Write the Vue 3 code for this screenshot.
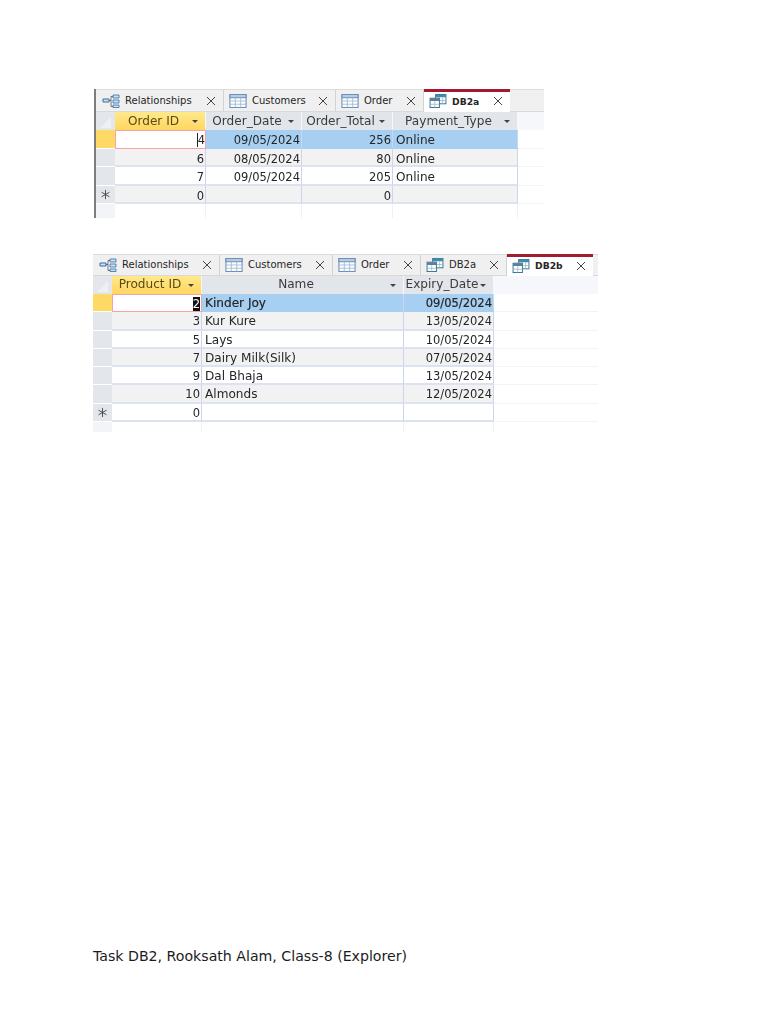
<script setup>
const orderSheet = {
  name: "order",
  tabs: [
    { label: "Relationships", icon: "rel", width: 127 },
    { label: "Customers", icon: "table", width: 112 },
    { label: "Order", icon: "table", width: 88 },
    { label: "DB2a", icon: "query", width: 86, active: true },
  ],
  selector: 19,
  columns: [
    { label: "Order ID", width: 91, picked: true, right: true },
    { label: "Order_Date", width: 96, right: true },
    { label: "Order_Total", width: 91, right: true },
    { label: "Payment_Type", width: 125 },
  ],
  rows: [
    ["4", "09/05/2024", "256", "Online"],
    ["6", "08/05/2024", "80", "Online"],
    ["7", "09/05/2024", "205", "Online"],
  ],
  newRow: ["0", "", "0", ""],
};

const productSheet = {
  name: "product",
  tabs: [
    { label: "Relationships", icon: "rel", width: 126 },
    { label: "Customers", icon: "table", width: 113 },
    { label: "Order", icon: "table", width: 88 },
    { label: "DB2a", icon: "query", width: 86 },
    { label: "DB2b", icon: "query", width: 86, active: true },
  ],
  selector: 19,
  columns: [
    { label: "Product ID", width: 90, picked: true, right: true },
    { label: "Name", width: 202 },
    { label: "Expiry_Date", width: 90, right: true },
  ],
  rows: [
    ["2", "Kinder Joy", "09/05/2024"],
    ["3", "Kur Kure", "13/05/2024"],
    ["5", "Lays", "10/05/2024"],
    ["7", "Dairy Milk(Silk)", "07/05/2024"],
    ["9", "Dal Bhaja", "13/05/2024"],
    ["10", "Almonds", "12/05/2024"],
  ],
  newRow: ["0", "", ""],
};

const sheets = [orderSheet, productSheet];

const gridColumns = (sheet) =>
  `${sheet.selector}px ${sheet.columns.map((c) => c.width + "px").join(" ")} 1fr`;
</script>

<template>
  <div class="page">
    <section v-for="sheet in sheets" :key="sheet.name" class="shot" :class="sheet.name">
      <div class="tabs">
        <div
          v-for="tab in sheet.tabs"
          :key="tab.label"
          class="tab"
          :class="{ active: tab.active }"
          :style="{ width: tab.width + 'px' }"
        >
          <svg v-if="tab.icon === 'rel'" class="icon" viewBox="0 0 18 14">
            <path d="M1 5h6v3H1z" fill="#cfe0f3" stroke="#2f6ea8" />
            <path d="M11 1h6v3h-6zM11 6h6v3h-6zM11 11h6v2.500h-6z" fill="#cfe0f3" stroke="#2f6ea8" stroke-width=".8" />
            <path d="M7 6.500h2V2.500h2M9 6.500V12.500h2" fill="none" stroke="#555" stroke-width=".8" />
          </svg>
          <svg v-else-if="tab.icon === 'table'" class="icon" viewBox="0 0 16 13">
            <rect x=".5" y=".5" width="15" height="12" fill="#fff" stroke="#6d8fb8" />
            <path d="M.5.5h15v3H.5z" fill="#b7cce4" stroke="#6d8fb8" />
            <path d="M5.500 3.500v9M10.500 3.500v9M.5 6.500h15M.5 9.500h15" stroke="#9db7d4" stroke-width=".8" fill="none" />
          </svg>
          <svg v-else class="icon" viewBox="0 0 18 15">
            <rect x="6.500" y=".5" width="11" height="10" fill="#fff" stroke="#2d6f8f" />
            <path d="M6.500.5h11v3h-11z" fill="#3f8da8" />
            <path d="M10 3.500v7M14 3.500v7M6.500 7h11" stroke="#8fb4c6" stroke-width=".8" />
            <rect x=".5" y="4.500" width="10" height="10" fill="#fff" stroke="#2d6f8f" />
            <path d="M.5 4.500h10v3H.5z" fill="#5f7f95" />
            <path d="M5.500 7.500v7M.5 11h10" stroke="#8fb4c6" stroke-width=".8" />
          </svg>
          <span class="tab-label">{{ tab.label }}</span>
          <svg class="close" viewBox="0 0 10 10">
            <path d="M1 1l8 8M9 1l-8 8" stroke="#444" stroke-width="1" fill="none" />
          </svg>
        </div>
        <div class="tabs-rest"></div>
      </div>

      <div class="row head" :style="{ gridTemplateColumns: gridColumns(sheet) }">
        <div class="corner"><span></span></div>
        <div v-for="col in sheet.columns" :key="col.label" class="th" :class="{ picked: col.picked }">
          <span class="th-label">{{ col.label }}</span>
          <i class="arrow"></i>
        </div>
        <div class="filler"></div>
      </div>

      <div
        v-for="(row, r) in sheet.rows"
        :key="r"
        class="row"
        :class="{ current: r === 0, alt: r % 2 === 1 }"
        :style="{ gridTemplateColumns: gridColumns(sheet) }"
      >
        <div class="sel"></div>
        <div
          v-for="(val, c) in row"
          :key="c"
          class="td"
          :class="{ right: sheet.columns[c].right, focus: r === 0 && c === 0 }"
        >
          <span v-if="r === 0 && c === 0" class="caret">{{ val }}</span>
          <template v-else>{{ val }}</template>
        </div>
        <div class="filler"></div>
      </div>

      <div class="row new" :style="{ gridTemplateColumns: gridColumns(sheet) }">
        <div class="sel">
          <svg class="star" viewBox="0 0 12 12">
            <path d="M6 1v10M1.700 3.500l8.600 5M10.300 3.500l-8.600 5" stroke="#444" stroke-width="1" fill="none" />
          </svg>
        </div>
        <div
          v-for="(val, c) in sheet.newRow"
          :key="c"
          class="td"
          :class="{ right: sheet.columns[c].right }"
        >{{ val }}</div>
        <div class="filler"></div>
      </div>

      <div class="tail" :style="{ gridTemplateColumns: gridColumns(sheet) }">
        <div class="tail-sel"></div>
        <div v-for="col in sheet.columns" :key="col.label" class="tail-cell"></div>
        <div></div>
      </div>
    </section>

    <p class="footer">Task DB2, Rooksath Alam, Class-8 (Explorer)</p>
  </div>
</template>

<style scoped>
.page {
  box-sizing: border-box;
  width: 768px;
  height: 1024px;
  padding: 89px 0 0 93px;
  display: flex;
  flex-direction: column;
  background: #fff;
  font-family: "DejaVu Sans", sans-serif;
  color: #262626;
}

.shot {
  font-size: 12.1px;
  filter: blur(0.3px);
}

.shot.order {
  width: 450px;
  margin-left: 1px;
  border-left: 2px solid #7d7d7d;
  box-sizing: border-box;
}

.shot.product {
  width: 505px;
  margin-top: 36px;
}

.tabs {
  display: flex;
  height: 23px;
  box-sizing: border-box;
  background: #f0f0f0;
  border-top: 1px solid #dcdcdc;
  border-bottom: 1px solid #d9d9d9;
  font-size: 10px;
}

.order .tabs {
  padding-left: 1px;
}

.product .tabs {
  height: 22px;
  padding-left: 1px;
}

.tab {
  display: flex;
  align-items: center;
  box-sizing: border-box;
  padding: 0 7px 0 5px;
  border-right: 1px solid #d2d2d2;
  flex: none;
}

.product .tab {
  padding-bottom: 1px;
}

.tab.active,
.product .tab.active {
  background: #fff;
  border-top: 3px solid #a4192d;
  margin-top: -1px;
  margin-bottom: -1px;
  border-right: 0;
  font-size: 9.2px;
  font-weight: 700;
  padding-bottom: 2px;
}

.icon {
  width: 18px;
  height: 14px;
  flex: none;
  margin-right: 5px;
}

.tab-label {
  flex: 1;
  white-space: nowrap;
}

.close {
  width: 10px;
  height: 10px;
  flex: none;
}

.tabs-rest {
  flex: 1;
}

.row {
  display: grid;
  height: 18.5px;
  box-sizing: border-box;
}

.product .row {
  height: 18.3px;
}

.row.head,
.product .row.head {
  height: 18px;
  background: #f5f7fb;
  line-height: 17px;
}

.corner {
  background: #e3e6ea;
  position: relative;
  overflow: hidden;
}

.corner span {
  position: absolute;
  right: 4px;
  bottom: 2px;
  width: 0;
  height: 0;
  border-left: 11px solid transparent;
  border-bottom: 11px solid #eef0f3;
}

.th {
  display: flex;
  align-items: center;
  justify-content: center;
  position: relative;
  background: #e2e5e9;
  border-right: 1px solid #f7f8fa;
  color: #3c3c3c;
  padding-right: 13px;
  overflow: hidden;
  white-space: nowrap;
}

.product .th {
  padding-bottom: 2px;
}

.th.picked {
  background: linear-gradient(#ffe98c, #ffd65f);
  color: #5a4a12;
}

.arrow {
  position: absolute;
  right: 7px;
  top: 8px;
  border-left: 3px solid transparent;
  border-right: 3px solid transparent;
  border-top: 3px solid #444;
}

.sel {
  background: #e3e6ea;
  border-bottom: 1px solid #fff;
  display: flex;
  align-items: center;
  justify-content: center;
}

.current .sel {
  background: #ffd966;
}

.td {
  box-sizing: border-box;
  padding: 1px 1px 0 3px;
  line-height: 19px;
  background: #fff;
  border-right: 1px solid #c9d6ee;
  border-bottom: 2px solid #dce2ef;
  white-space: nowrap;
  overflow: hidden;
}

.product .td {
  padding-top: 0;
  line-height: 18px;
}

.alt .td,
.order .new .td {
  background: #f2f2f2;
}

.td.right {
  font-size: 11.5px;
  text-align: right;
}

.current .td {
  background: #a6cff2;
  border-bottom-color: #a6cff2;
}

.current .td.focus {
  background: #fff;
  border: 1px solid #f4a3a6;
  padding-top: 0;
}

.order .caret {
  border-left: 1px solid #222;
  margin-right: -1px;
}

.product .caret {
  background: #111;
  color: #fff;
}

.product .current .td {
  -webkit-text-stroke: 0.2px #262626;
}

.product .current .td.focus {
  -webkit-text-stroke: 0;
}

.row:not(.head) .filler {
  border-bottom: 1px solid #f1f3f7;
}

.star {
  width: 11px;
  height: 11px;
}

.tail {
  display: grid;
}

.order .tail {
  height: 14px;
}

.product .tail {
  height: 10px;
}

.tail-sel {
  background: #f3f4f7;
}

.tail-cell {
  border-right: 1px solid #eff1f5;
}

.footer {
  margin: auto 0 60px;
  font-size: 14.15px;
  line-height: 16px;
  color: #1c1c1c;
}
</style>
